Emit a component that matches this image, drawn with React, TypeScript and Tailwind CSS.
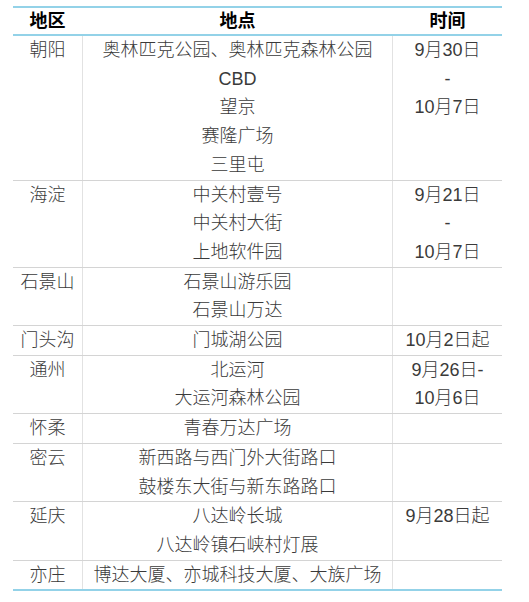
import React from "react";

type Group = { region: string; places: string[]; times: string[] };

const groups: Group[] = [
  { region: "朝阳", places: ["奥林匹克公园、奥林匹克森林公园", "CBD", "望京", "赛隆广场", "三里屯"], times: ["9月30日", "-", "10月7日"] },
  { region: "海淀", places: ["中关村壹号", "中关村大街", "上地软件园"], times: ["9月21日", "-", "10月7日"] },
  { region: "石景山", places: ["石景山游乐园", "石景山万达"], times: [] },
  { region: "门头沟", places: ["门城湖公园"], times: ["10月2日起"] },
  { region: "通州", places: ["北运河", "大运河森林公园"], times: ["9月26日-", "10月6日"] },
  { region: "怀柔", places: ["青春万达广场"], times: [] },
  { region: "密云", places: ["新西路与西门外大街路口", "鼓楼东大街与新东路路口"], times: [] },
  { region: "延庆", places: ["八达岭长城", "八达岭镇石峡村灯展"], times: ["9月28日起"] },
  { region: "亦庄", places: ["博达大厦、亦城科技大厦、大族广场"], times: [] },
];

export default function App() {
  return (
    <div
      className="w-[529px] h-[602px] bg-white pt-[6px] pl-[13px]"
      style={{ fontFamily: '"Liberation Sans", "Noto Sans CJK SC", sans-serif' }}
    >
      <div className="w-[489px] text-[18px] text-[#3a3a3a]">
        <div className="grid grid-cols-[69px_311px_109px] h-[30px] border-t-2 border-b-2 border-[#93d2e8] font-bold text-black leading-[26px] text-center">
          <div>地区</div>
          <div>地点</div>
          <div>时间</div>
        </div>
        {groups.map((g, i) => (
          <div
            key={g.region}
            className={
              "grid grid-cols-[69px_311px_109px] leading-[28.7px] text-center font-light " +
              (i === groups.length - 1 ? "border-b-2 border-[#93d2e8]" : "border-b border-[#d4d4d4]")
            }
          >
            <div>{g.region}</div>
            <div className="border-l border-r border-[#e2e2e2] flex flex-col">
              {g.places.map((p) => (
                <div key={p}>{p}</div>
              ))}
            </div>
            <div className="flex flex-col">
              {g.times.map((t, j) => (
                <div key={j}>{t}</div>
              ))}
            </div>
          </div>
        ))}
      </div>
    </div>
  );
}
